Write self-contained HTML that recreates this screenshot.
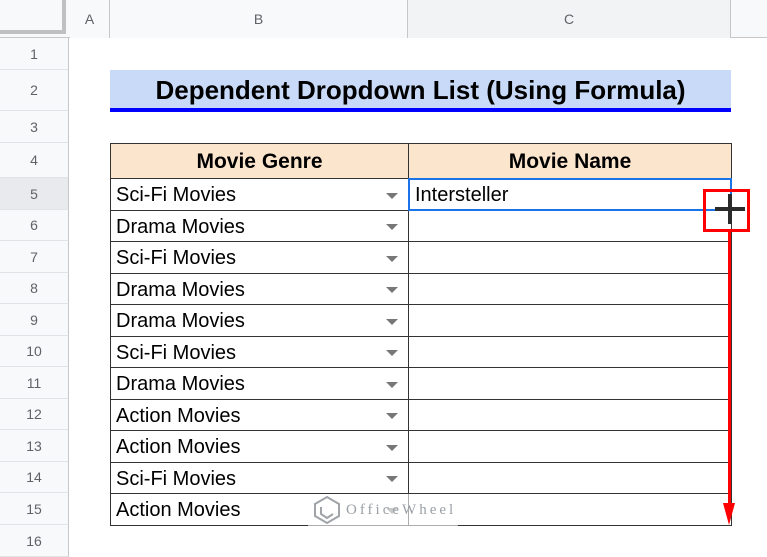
<!DOCTYPE html>
<html><head><style>
body{margin:0;width:767px;height:548px;overflow:hidden;background:#fff;font-family:"Liberation Sans",Arial,sans-serif;position:relative}
.a{position:absolute}
.hdr{background:#f8f9fa;color:#5f6368;font-size:14px;text-align:center;box-sizing:border-box}
.rn{left:0;width:69px;border-bottom:1px solid #e1e3e6;border-right:1px solid #c7c7c7;display:flex;align-items:center;justify-content:center}
.cell{font-size:20px;color:#000;box-sizing:border-box;display:flex;align-items:center;padding-top:2px}
.b{left:110px;width:299px;height:33px;border:1px solid #333;padding-left:5px}
.ln{left:408px;width:324px;height:1px;background:#333}
.tri{position:absolute;right:10px;top:50%;margin-top:-2px;width:0;height:0;border-left:6px solid transparent;border-right:6px solid transparent;border-top:6px solid #777}
</style></head><body>
<div class="a hdr" style="left:0;top:0;width:767px;height:38px;border-bottom:1px solid #c7c7c7"></div>
<div class="a" style="left:0;top:0;background:#f8f9fa;border-right:4px solid #c0c0c0;border-bottom:4px solid #c0c0c0;width:62px;height:30px"></div>
<div class="a hdr" style="left:70px;top:0;width:40px;height:38px;line-height:38px;border-right:1px solid #c7c7c7">A</div>
<div class="a hdr" style="left:110px;top:0;width:298px;height:38px;line-height:38px;border-right:1px solid #c7c7c7">B</div>
<div class="a hdr" style="left:408px;top:0;width:323px;height:38px;line-height:38px;border-right:1px solid #c7c7c7;background:#f1f3f4">C</div>
<div class="a hdr rn" style="top:38px;height:32px">1</div>
<div class="a hdr rn" style="top:70px;height:41px">2</div>
<div class="a hdr rn" style="top:111px;height:32px">3</div>
<div class="a hdr rn" style="top:143px;height:35px">4</div>
<div class="a hdr rn" style="top:178px;height:32px;background:#e8eaed">5</div>
<div class="a hdr rn" style="top:210px;height:31px">6</div>
<div class="a hdr rn" style="top:241px;height:32px">7</div>
<div class="a hdr rn" style="top:273px;height:31px">8</div>
<div class="a hdr rn" style="top:304px;height:32px">9</div>
<div class="a hdr rn" style="top:336px;height:31px">10</div>
<div class="a hdr rn" style="top:367px;height:32px">11</div>
<div class="a hdr rn" style="top:399px;height:31px">12</div>
<div class="a hdr rn" style="top:430px;height:32px">13</div>
<div class="a hdr rn" style="top:462px;height:31px">14</div>
<div class="a hdr rn" style="top:493px;height:32px">15</div>
<div class="a hdr rn" style="top:525px;height:32px">16</div>
<div class="a" style="left:110px;top:70px;width:621px;height:38px;background:#c9daf8;border-bottom:4px solid #0000ff;font-weight:bold;font-size:26px;text-align:center;line-height:41px">Dependent Dropdown List (Using Formula)</div>
<div class="a cell" style="left:110px;top:143px;width:299px;height:36px;background:#fce5cd;border:1px solid #333;font-weight:bold;justify-content:center;font-size:21px">Movie Genre</div>
<div class="a cell" style="left:408px;top:143px;width:324px;height:36px;background:#fce5cd;border:1px solid #333;font-weight:bold;justify-content:center;font-size:21px">Movie Name</div>
<div class="a cell b" style="top:178px">Sci-Fi Movies<span class="tri"></span></div>
<div class="a cell b" style="top:210px;height:32px">Drama Movies<span class="tri"></span></div>
<div class="a cell b" style="top:241px;height:33px">Sci-Fi Movies<span class="tri"></span></div>
<div class="a cell b" style="top:273px;height:32px">Drama Movies<span class="tri"></span></div>
<div class="a cell b" style="top:304px">Drama Movies<span class="tri"></span></div>
<div class="a cell b" style="top:336px;height:32px">Sci-Fi Movies<span class="tri"></span></div>
<div class="a cell b" style="top:367px">Drama Movies<span class="tri"></span></div>
<div class="a cell b" style="top:399px;height:32px">Action Movies<span class="tri"></span></div>
<div class="a cell b" style="top:430px">Action Movies<span class="tri"></span></div>
<div class="a cell b" style="top:462px;height:32px">Sci-Fi Movies<span class="tri"></span></div>
<div class="a cell b" style="top:493px">Action Movies<span class="tri"></span></div>
<div class="a" style="left:408px;top:210px;width:324px;height:316px;box-sizing:border-box;border:1px solid #333"></div>
<div class="a ln" style="top:241px"></div>
<div class="a ln" style="top:273px"></div>
<div class="a ln" style="top:304px"></div>
<div class="a ln" style="top:336px"></div>
<div class="a ln" style="top:367px"></div>
<div class="a ln" style="top:399px"></div>
<div class="a ln" style="top:430px"></div>
<div class="a ln" style="top:462px"></div>
<div class="a ln" style="top:493px"></div>
<div class="a cell" style="left:408px;top:178px;width:324px;height:33px;border:2px solid #1a73e8;padding-left:5px;background:#fff">Intersteller</div>
<div class="a" style="left:308px;top:494px;width:150px;height:32px;background:rgba(255,255,255,0.6);display:flex;align-items:center;color:#9aa0a6;font-family:'Liberation Serif',serif;font-size:15px;letter-spacing:3px">
<svg width="30" height="30" viewBox="0 0 30 30" style="margin:0 4px"><path d="M15 2 L27 9 V21 L15 28 L3 21 V9 Z" fill="none" stroke="#a0a4a8" stroke-width="2"/><path d="M9 12 V19 L15 23 L21 19" fill="none" stroke="#a0a4a8" stroke-width="2"/></svg>OfficeWheel</div>
<div class="a" style="left:703px;top:189px;width:47px;height:43px;border:3px solid #f00;box-sizing:border-box"></div>
<div class="a" style="left:715px;top:207px;width:30px;height:4px;background:#2b2b2b"></div>
<div class="a" style="left:728px;top:194px;width:4px;height:30px;background:#2b2b2b"></div>
<div class="a" style="left:728px;top:232px;width:3px;height:276px;background:#f00"></div>
<div class="a" style="left:723px;top:503px;width:0;height:0;border-left:6.5px solid transparent;border-right:6.5px solid transparent;border-top:22px solid #f00"></div>
</body></html>
